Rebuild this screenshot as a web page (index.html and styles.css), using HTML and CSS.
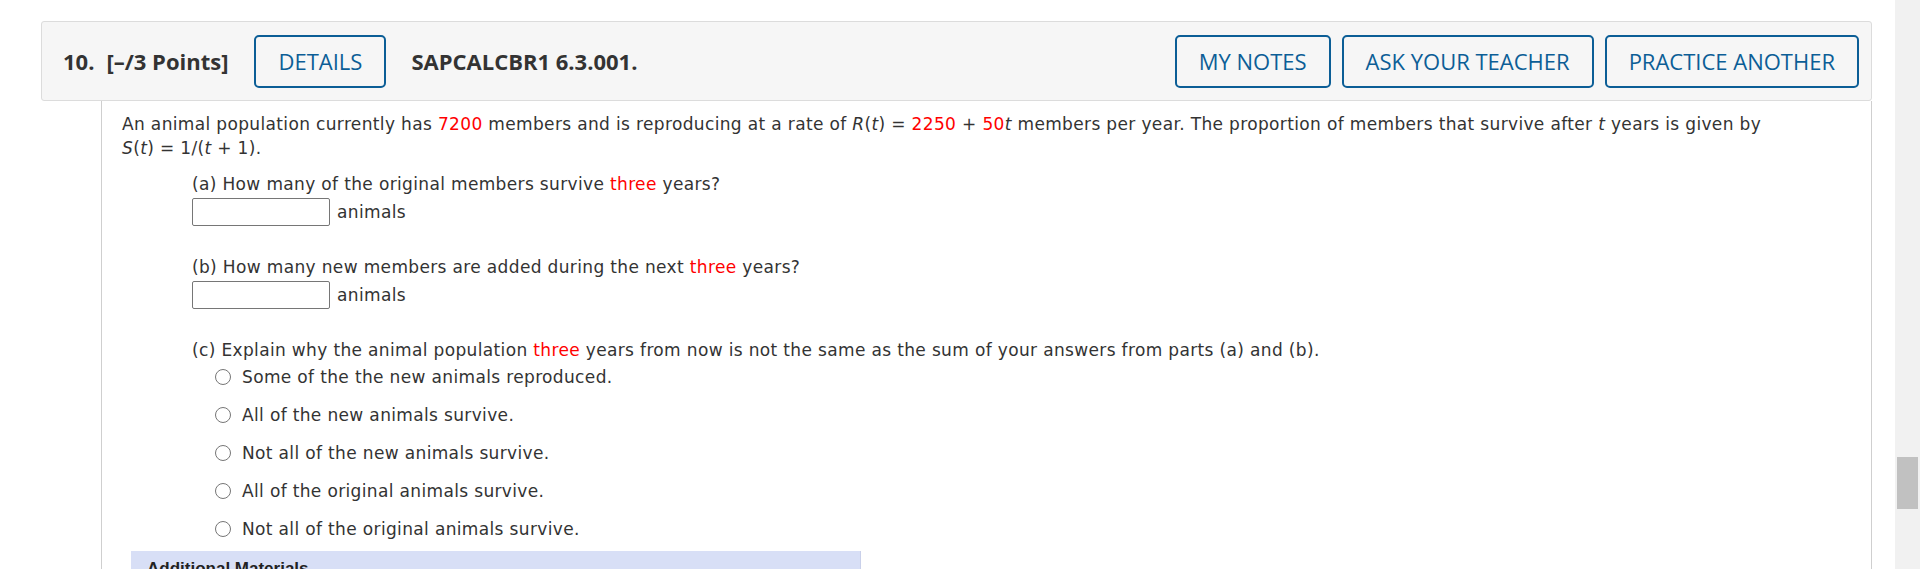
FILE: index.html
```html
<!DOCTYPE html>
<html lang="en">
<head>
    <meta charset="UTF-8">
    <meta name="viewport" content="width=device-width, initial-scale=1.0">
    <title>Question 10</title>
    <link rel="stylesheet" href="styles.css">
</head>
<body>

    <div class="question">
        <div class="q-header">
            <span class="q-num">10.</span>
            <span class="q-points">[&ndash;/3 Points]</span>
            <button class="q-btn">DETAILS</button>
            <span class="q-code">SAPCALCBR1 6.3.001.</span>
            <div class="q-actions">
                <button class="q-btn">MY NOTES</button>
                <button class="q-btn">ASK YOUR TEACHER</button>
                <button class="q-btn">PRACTICE ANOTHER</button>
            </div>
        </div>

        <div class="q-body">
            <p class="intro">An animal population currently has <span class="red">7200</span> members and is reproducing at a rate of <span class="math"><i>R</i>(<i>t</i>) = <span class="red">2250</span> + <span class="red">50</span><i>t</i></span> members per year. The proportion of members that survive after <i>t</i> years is given by <span class="math"><i>S</i>(<i>t</i>) = 1/(<i>t</i> + 1).</span></p>

            <div class="part">
                <p>(a) How many of the original members survive <span class="red">three</span> years?</p>
                <div class="answer"><input type="text" class="answer-box"><span>animals</span></div>
            </div>

            <div class="part">
                <p>(b) How many new members are added during the next <span class="red">three</span> years?</p>
                <div class="answer"><input type="text" class="answer-box"><span>animals</span></div>
            </div>

            <div class="part">
                <p>(c) Explain why the animal population <span class="red">three</span> years from now is not the same as the sum of your answers from parts (a) and (b).</p>
                <ul class="choices">
                    <li><input type="radio" name="c"><span>Some of the the new animals reproduced.</span></li>
                    <li><input type="radio" name="c"><span>All of the new animals survive.</span></li>
                    <li><input type="radio" name="c"><span>Not all of the new animals survive.</span></li>
                    <li><input type="radio" name="c"><span>All of the original animals survive.</span></li>
                    <li><input type="radio" name="c"><span>Not all of the original animals survive.</span></li>
                </ul>
            </div>

            <div class="materials">Additional Materials</div>
        </div>
    </div>

    <div class="scrollbar"><div class="thumb"></div></div>

</body>
</html>
```

FILE: styles.css
```css
body {
    margin: 0;
    background-color: white;
    font-family: "DejaVu Sans", Verdana, sans-serif;
    color: #333;
    overflow: hidden;
}
.question {
    margin: 21px 48px 0 41px;
}
.q-header {
    display: flex;
    align-items: center;
    height: 78px;
    padding: 0 12px 0 21px;
    background-color: #f6f6f6;
    border: 1px solid #dcdcdc;
    border-radius: 3px;
    font-family: "Open Sans", sans-serif;
    font-size: 22px;
    color: #333;
}
.q-num, .q-points, .q-code {
    font-weight: 700;
}
.q-points {
    margin-left: 12px;
}
.q-code {
    margin-left: 25px;
}
.q-btn {
    height: 53px;
    padding: 0 22px;
    margin-left: 26px;
    font-family: "Open Sans", sans-serif;
    font-size: 22px;
    color: #0c5e96;
    background-color: #f6f6f6;
    border: 2px solid #0c5e96;
    border-radius: 5px;
    cursor: pointer;
}
.q-actions {
    display: flex;
    gap: 11px;
    margin-left: auto;
}
.q-actions .q-btn {
    margin-left: 0;
}
.q-body {
    margin-left: 60px;
    padding: 11px 20px 0 20px;
    border-left: 1px solid #cfcfcf;
    border-right: 1px solid #cfcfcf;
    font-size: 17px;
    letter-spacing: 0.35px;
    line-height: 24px;
}
.q-body p {
    margin: 0;
}
.red {
    color: #f00;
}
.math {
    white-space: nowrap;
}
.part {
    margin: 12px 0 0 70px;
}
.part + .part {
    margin-top: 29px;
}
.answer {
    display: flex;
    align-items: center;
    gap: 7px;
    margin-top: 2px;
}
.answer-box {
    width: 138px;
    height: 28px;
    box-sizing: border-box;
    border: 1px solid #767676;
    border-radius: 2px;
    margin: 0;
}
.choices {
    list-style: none;
    margin: 3px 0 0 0;
    padding: 0 0 0 23px;
}
.choices li {
    display: flex;
    align-items: center;
    gap: 11px;
    height: 24px;
    margin-bottom: 14px;
}
.choices input {
    appearance: none;
    width: 16px;
    height: 16px;
    margin: 0;
    border: 1px solid #767676;
    border-radius: 50%;
    background-color: white;
}
.materials {
    margin: -4px 0 0 9px;
    width: 697px;
    padding: 6px 16px 10px 16px;
    background-color: #d8dff6;
    border-right: 1px solid #c9d0ea;
    font-family: "Liberation Sans", Arial, sans-serif;
    font-weight: 700;
    font-size: 17px;
    letter-spacing: 0;
    color: #222;
}
.scrollbar {
    position: fixed;
    top: 0;
    right: 0;
    width: 25px;
    height: 100%;
    background-color: #f1f1f1;
}
.thumb {
    position: absolute;
    top: 457px;
    left: 2px;
    width: 21px;
    height: 52px;
    background-color: #c1c1c1;
}
```
